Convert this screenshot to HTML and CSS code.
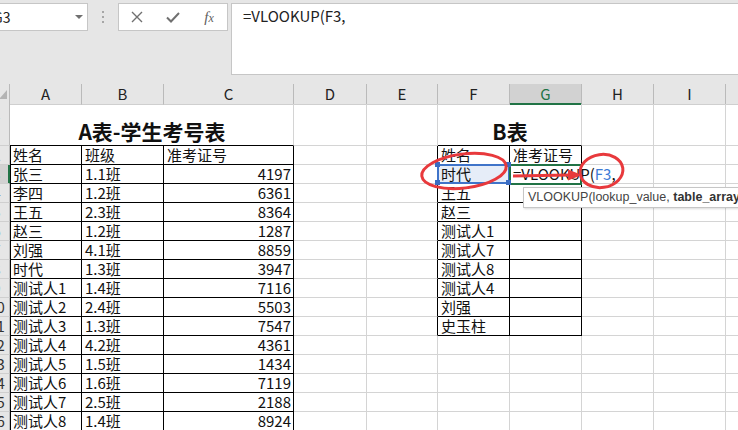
FILE: index.html
```html
<!DOCTYPE html>
<html lang="zh-CN">
<head>
    <meta charset="UTF-8">
    <meta name="viewport" content="width=device-width, initial-scale=1.0">
    <title>VLOOKUP - 学生考号表</title>
    <link rel="stylesheet" href="styles.css">
</head>
<body>
    <div class="app">
        <div class="formula-bar">
            <div class="name-box"><span>G3</span><i class="caret"></i></div>
            <div class="grip"><i></i><i></i><i></i></div>
            <div class="fx-buttons">
                <span class="fx-btn"><svg width="12" height="12" viewBox="0 0 12 12"><path d="M1 1L11 11M11 1L1 11" stroke="#707070" stroke-width="1.4" fill="none"/></svg></span>
                <span class="fx-btn"><svg width="14" height="11" viewBox="0 0 14 11"><path d="M1 5.5L5 9.5L13 1" stroke="#707070" stroke-width="2" fill="none"/></svg></span>
                <span class="fx-btn fx"><i>f</i><i class="x">x</i></span>
            </div>
            <div class="formula-input">=VLOOKUP(F3,</div>
        </div>

        <div class="sheet">
            <div class="row hdr">
                <div class="corner"><i></i></div>
                <div>A</div><div>B</div><div>C</div><div>D</div><div>E</div><div>F</div><div class="sel">G</div><div>H</div><div>I</div><div>J</div>
            </div>
            <div class="row r1">
                <div class="rh">1</div>
                <div class="title title-a">A表-学生考号表</div>
                <div></div><div></div>
                <div class="title title-b">B表</div>
                <div></div><div></div><div></div>
            </div>
            <div class="row">
                <div class="rh">2</div>
                <div class="bd first">姓名</div><div class="bd">班级</div><div class="bd">准考证号</div>
                <div></div><div class="edge"></div>
                <div class="bd">姓名</div><div class="bd">准考证号</div>
                <div></div><div></div><div></div>
            </div>
            <div class="row">
                <div class="rh sel">3</div>
                <div class="bd first">张三</div><div class="bd">1.1班</div><div class="bd num">4197</div>
                <div></div><div class="edge"></div>
                <div class="bd pick">时代<span class="handle tl"></span><span class="handle tr"></span><span class="handle bl"></span><span class="handle br"></span></div>
                <div class="bd active">=VLOOKUP(<span class="ref">F3</span>,</div>
                <div></div><div></div><div></div>
            </div>
            <div class="row">
                <div class="rh">4</div>
                <div class="bd first">李四</div><div class="bd">1.2班</div><div class="bd num">6361</div>
                <div></div><div class="edge"></div>
                <div class="bd">王五</div><div class="bd"></div>
                <div></div><div></div><div></div>
            </div>
            <div class="row">
                <div class="rh">5</div>
                <div class="bd first">王五</div><div class="bd">2.3班</div><div class="bd num">8364</div>
                <div></div><div class="edge"></div>
                <div class="bd">赵三</div><div class="bd"></div>
                <div></div><div></div><div></div>
            </div>
            <div class="row">
                <div class="rh">6</div>
                <div class="bd first">赵三</div><div class="bd">1.2班</div><div class="bd num">1287</div>
                <div></div><div class="edge"></div>
                <div class="bd">测试人1</div><div class="bd"></div>
                <div></div><div></div><div></div>
            </div>
            <div class="row">
                <div class="rh">7</div>
                <div class="bd first">刘强</div><div class="bd">4.1班</div><div class="bd num">8859</div>
                <div></div><div class="edge"></div>
                <div class="bd">测试人7</div><div class="bd"></div>
                <div></div><div></div><div></div>
            </div>
            <div class="row">
                <div class="rh">8</div>
                <div class="bd first">时代</div><div class="bd">1.3班</div><div class="bd num">3947</div>
                <div></div><div class="edge"></div>
                <div class="bd">测试人8</div><div class="bd"></div>
                <div></div><div></div><div></div>
            </div>
            <div class="row">
                <div class="rh">9</div>
                <div class="bd first">测试人1</div><div class="bd">1.4班</div><div class="bd num">7116</div>
                <div></div><div class="edge"></div>
                <div class="bd">测试人4</div><div class="bd"></div>
                <div></div><div></div><div></div>
            </div>
            <div class="row">
                <div class="rh">10</div>
                <div class="bd first">测试人2</div><div class="bd">2.4班</div><div class="bd num">5503</div>
                <div></div><div class="edge"></div>
                <div class="bd">刘强</div><div class="bd"></div>
                <div></div><div></div><div></div>
            </div>
            <div class="row">
                <div class="rh">11</div>
                <div class="bd first">测试人3</div><div class="bd">1.3班</div><div class="bd num">7547</div>
                <div></div><div class="edge"></div>
                <div class="bd">史玉柱</div><div class="bd"></div>
                <div></div><div></div><div></div>
            </div>
            <div class="row">
                <div class="rh">12</div>
                <div class="bd first">测试人4</div><div class="bd">4.2班</div><div class="bd num">4361</div>
                <div></div><div></div><div></div><div></div><div></div><div></div><div></div>
            </div>
            <div class="row">
                <div class="rh">13</div>
                <div class="bd first">测试人5</div><div class="bd">1.5班</div><div class="bd num">1434</div>
                <div></div><div></div><div></div><div></div><div></div><div></div><div></div>
            </div>
            <div class="row">
                <div class="rh">14</div>
                <div class="bd first">测试人6</div><div class="bd">1.6班</div><div class="bd num">7119</div>
                <div></div><div></div><div></div><div></div><div></div><div></div><div></div>
            </div>
            <div class="row">
                <div class="rh">15</div>
                <div class="bd first">测试人7</div><div class="bd">2.5班</div><div class="bd num">2188</div>
                <div></div><div></div><div></div><div></div><div></div><div></div><div></div>
            </div>
            <div class="row">
                <div class="rh">16</div>
                <div class="bd first">测试人8</div><div class="bd">1.4班</div><div class="bd num">8924</div>
                <div></div><div></div><div></div><div></div><div></div><div></div><div></div>
            </div>
        </div>

        <!-- function hint shown while typing the formula -->
        <div class="tooltip">VLOOKUP(lookup_value, <b>table_array</b>, col_index_num, [range_lookup])</div>

        <!-- red hand-drawn marks -->
        <svg class="marks" width="738" height="430" viewBox="0 0 738 430">
            <ellipse cx="464" cy="171" rx="42.5" ry="17" transform="rotate(-7 464 171)" fill="none" stroke="#e8393c" stroke-width="3"/>
            <ellipse cx="601.5" cy="171" rx="21.5" ry="16.5" transform="rotate(-8 601.5 171)" fill="none" stroke="#e8393c" stroke-width="3"/>
            <path d="M513 176L570 175" stroke="#e8393c" stroke-width="3" fill="none"/>
            <path d="M582 175L568 169.5L568 180.5Z" fill="#e8393c"/>
        </svg>
    </div>
</body>
</html>
```

FILE: styles.css
```css
body {
    margin: 0;
    background-color: #fff;
    font-family: "Noto Sans CJK SC", sans-serif;
    color: #111;
}

.app {
    position: relative;
    width: 738px;
    height: 430px;
    overflow: hidden;
}

/* formula bar */

.formula-bar {
    display: flex;
    align-items: flex-start;
    height: 84px;
    padding-top: 3px;
    box-sizing: border-box;
    background-color: #e6e6e6;
}

.name-box {
    display: flex;
    align-items: center;
    justify-content: space-between;
    flex: none;
    width: 108px;
    height: 28px;
    margin-left: -20px;
    padding: 0 4px 0 12px;
    box-sizing: border-box;
    background-color: #fff;
    border: 1px solid #c6c6c6;
    font-size: 14px;
    color: #222;
}

.caret {
    width: 0;
    height: 0;
    border-left: 4px solid transparent;
    border-right: 4px solid transparent;
    border-top: 4px solid #707070;
}

.grip {
    display: flex;
    flex-direction: column;
    align-items: center;
    justify-content: center;
    gap: 3px;
    flex: none;
    width: 30px;
    height: 28px;
}

.grip i {
    width: 2px;
    height: 2px;
    background-color: #a6a6a6;
}

.fx-buttons {
    display: flex;
    flex: none;
    width: 110px;
    height: 28px;
    box-sizing: border-box;
    background-color: #fff;
    border: 1px solid #c6c6c6;
}

.fx-btn {
    display: flex;
    align-items: center;
    justify-content: center;
    width: 36px;
}

.fx {
    font-family: "Liberation Serif", serif;
    font-style: italic;
    font-size: 15px;
    color: #606060;
}

.fx i {
    font-style: italic;
}

.fx .x {
    font-size: 12px;
    margin-top: 3px;
}

.formula-input {
    flex: 1;
    height: 72px;
    margin-left: 3px;
    padding: 2px 0 0 11px;
    box-sizing: border-box;
    background-color: #fff;
    border: 1px solid #c6c6c6;
    border-right: none;
    font-size: 15px;
    line-height: 20px;
    color: #222;
}

/* sheet grid */

.sheet {
    margin-left: -16px;
}

.row {
    display: grid;
    grid-template-columns: 26px 72px 82px 130px 73px 71px 72px 72px 72px 72px 72px;
    height: 19px;
}

.row > div {
    box-sizing: border-box;
    padding: 0 2px 0 3px;
    border-right: 1px solid #d4d4d4;
    border-bottom: 1px solid #d4d4d4;
    font-size: 15px;
    line-height: 18px;
    white-space: nowrap;
}

.row.hdr {
    height: 20px;
}

.row.r1 {
    height: 42px;
}

.hdr > div {
    padding: 0;
    background-color: #e6e6e6;
    border-right-color: #bababa;
    border-bottom-color: #cfcfcf;
    text-align: center;
    line-height: 19px;
    color: #222;
}

.hdr > .sel {
    background-color: #d2d2d2;
    border-bottom: 2px solid #217346;
    color: #217346;
}

.hdr > .corner {
    display: flex;
    align-items: flex-end;
    justify-content: flex-end;
    padding: 0 2px 5px 0;
}

.corner i {
    width: 0;
    height: 0;
    border-left: 8px solid transparent;
    border-bottom: 9px solid #b4b4b4;
}

.row > .rh {
    padding: 0;
    background-color: #e6e6e6;
    border-right-color: #bababa;
    border-bottom-color: #cfcfcf;
    text-align: center;
    color: #333;
}

.row > .rh.sel {
    background-color: #d2d2d2;
    border-right-color: #217346;
    box-shadow: inset -1px 0 #217346;
}

.row > .title {
    display: flex;
    align-items: flex-end;
    justify-content: center;
    padding-bottom: 2px;
    border-bottom-color: #000;
    font-size: 21px;
    font-weight: bold;
    line-height: 24px;
}

.title-a {
    grid-column: span 3;
}

.title-b {
    grid-column: span 2;
}

.row > .bd {
    border-right-color: #000;
    border-bottom-color: #000;
}

.row > .first {
    box-shadow: inset 1px 0 #000;
}

.row > .edge {
    border-right-color: #000;
}

.row > .num {
    text-align: right;
}

/* selection state */

.row > .pick {
    position: relative;
    background-color: #e6edf8;
}

.pick::before {
    content: "";
    position: absolute;
    top: -1px;
    left: -1px;
    right: -1px;
    bottom: -1px;
    border: 2px solid #3f74c9;
    z-index: 1;
}

.handle {
    position: absolute;
    width: 5px;
    height: 5px;
    background-color: #3a6cc2;
    z-index: 2;
}

.handle.tl { left: -3px; top: -3px; }
.handle.tr { right: -2px; top: -3px; }
.handle.bl { left: -3px; bottom: -2px; }
.handle.br { right: -2px; bottom: -2px; }

.row > .active {
    position: relative;
    overflow: visible;
}

.active::after {
    content: "";
    position: absolute;
    top: -1px;
    left: -1px;
    right: -1px;
    bottom: -2px;
    border: 2px solid #217346;
    z-index: 1;
}

.ref {
    color: #3d7bd6;
}

/* overlays */

.tooltip {
    position: absolute;
    left: 523px;
    top: 187px;
    height: 21px;
    padding: 0 8px 0 4px;
    box-sizing: border-box;
    background-color: #fff;
    border: 1px solid #c6c6c6;
    box-shadow: 1px 1px 2px rgba(0, 0, 0, 0.15);
    font-family: "Liberation Sans", sans-serif;
    font-size: 12.5px;
    line-height: 19px;
    color: #444;
    white-space: nowrap;
    z-index: 4;
}

.tooltip b {
    color: #333;
}

.marks {
    position: absolute;
    left: 0;
    top: 0;
    z-index: 5;
    pointer-events: none;
}
```
